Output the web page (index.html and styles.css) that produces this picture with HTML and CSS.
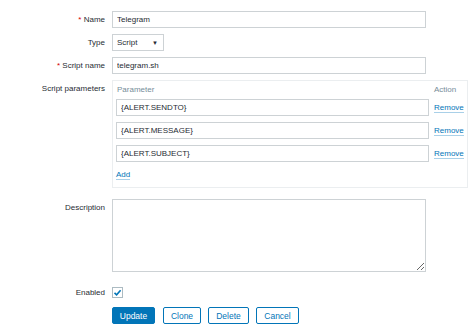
FILE: index.html
```html
<!DOCTYPE html>
<html lang="en">
<head>
  <title>Media type</title>
  <link rel="stylesheet" href="styles.css">
</head>
<body>
  <form class="form">
    <div class="row">
      <label class="label"><span class="req">*</span> Name</label>
      <input class="text wide" type="text" value="Telegram">
    </div>

    <div class="row">
      <label class="label">Type</label>
      <div class="select"><span>Script</span><span class="arrow">&#9660;</span></div>
    </div>

    <div class="row">
      <label class="label"><span class="req">*</span> Script name</label>
      <input class="text wide" type="text" value="telegram.sh">
    </div>

    <!-- Script parameters table -->
    <div class="row row-top row-params">
      <label class="label label-top">Script parameters</label>
      <div class="params">
        <div class="params-head">
          <span class="col-param">Parameter</span>
          <span>Action</span>
        </div>
        <div class="param">
          <input class="text param-input" type="text" value="{ALERT.SENDTO}">
          <a class="link" href="#">Remove</a>
        </div>
        <div class="param">
          <input class="text param-input" type="text" value="{ALERT.MESSAGE}">
          <a class="link" href="#">Remove</a>
        </div>
        <div class="param">
          <input class="text param-input" type="text" value="{ALERT.SUBJECT}">
          <a class="link" href="#">Remove</a>
        </div>
        <div class="add"><a class="link" href="#">Add</a></div>
      </div>
    </div>

    <div class="row row-top row-desc">
      <label class="label label-top">Description</label>
      <textarea class="text wide area"></textarea>
    </div>

    <div class="row row-check">
      <label class="label">Enabled</label>
      <span class="checkbox">
        <svg width="9" height="9" viewBox="0 0 9 9"><path d="M1.5 4.8 L3.6 6.8 L7.6 2.2" fill="none" stroke="#0275b8" stroke-width="1.6"/></svg>
      </span>
    </div>

    <div class="row buttons">
      <button type="button" class="btn btn-main">Update</button>
      <button type="button" class="btn btn-alt w-clone">Clone</button>
      <button type="button" class="btn btn-alt w-delete">Delete</button>
      <button type="button" class="btn btn-alt w-cancel">Cancel</button>
    </div>
  </form>
</body>
</html>
```

FILE: styles.css
```css
body {
  margin: 0;
  font-family: "Liberation Sans", Arial, sans-serif;
  font-size: 8px;
  color: #1f2c33;
  background: #fff;
}
.form {
  padding-top: 11px;
}
.row {
  display: flex;
  align-items: center;
  margin-bottom: 6px;
}
.row-top {
  align-items: flex-start;
}
.label {
  flex: none;
  width: 105px;
  margin-right: 7px;
  text-align: right;
  line-height: 12px;
}
.label-top {
  margin-top: 3px;
}
.req {
  color: #d40000;
}
.text {
  box-sizing: border-box;
  height: 17px;
  margin: 0;
  padding: 0 4px;
  border: 1px solid #cdd2d5;
  border-radius: 0;
  font: inherit;
  color: #1f2c33;
  background: #fff;
  outline: none;
}
.wide {
  width: 314px;
}
.select {
  box-sizing: border-box;
  width: 52px;
  height: 17px;
  padding: 0 5px 0 4px;
  border: 1px solid #cdd2d5;
  display: flex;
  align-items: center;
  justify-content: space-between;
}
.arrow {
  font-size: 6px;
}
.row-params {
  margin-bottom: 11px;
}
.params {
  box-sizing: border-box;
  width: 356px;
  padding: 3px 3px 6px 3px;
  border: 1px solid #ebeef0;
}
.params-head {
  display: flex;
  line-height: 12px;
  color: #768d99;
  margin-bottom: 3px;
}
.col-param {
  width: 317px;
  padding-left: 1px;
}
.param {
  display: flex;
  align-items: center;
  margin-bottom: 6px;
}
.param:last-of-type {
  margin-bottom: 0;
}
.param-input {
  width: 313px;
  margin-right: 5px;
}
.add {
  margin-top: 7px;
  line-height: 12px;
}
.link {
  color: #0275b8;
  text-decoration: none;
  border-bottom: 1px solid #a9d0e8;
}
.row-desc {
  margin-bottom: 12px;
}
.area {
  height: 73px;
  padding: 2px 4px;
  resize: both;
}
.row-check {
  height: 17px;
}
.checkbox {
  box-sizing: border-box;
  width: 11px;
  height: 11px;
  border: 1px solid #acbbc2;
  display: flex;
  align-items: center;
  justify-content: center;
}
.buttons {
  padding-left: 112px;
}
.btn {
  box-sizing: border-box;
  height: 17px;
  margin: 0 7px 0 0;
  padding: 0;
  border: 1px solid #0275b8;
  border-radius: 2px;
  font-family: "Liberation Sans", Arial, sans-serif;
  font-size: 8.5px;
  cursor: pointer;
}
.btn-main {
  width: 43px;
  margin-right: 8px;
  background: #0275b8;
  color: #fff;
}
.btn-alt {
  background: #fff;
  color: #0275b8;
}
.w-clone {
  width: 38px;
}
.w-delete {
  width: 41px;
}
.w-cancel {
  width: 43px;
}
```
